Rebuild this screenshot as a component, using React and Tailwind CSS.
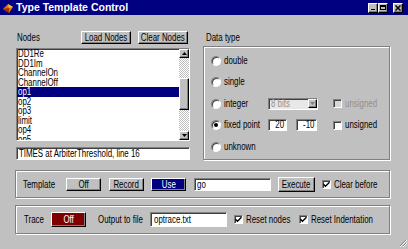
import { Fragment } from "react";

const raised =
  "border border-t-white border-l-white border-r-black border-b-black shadow-[inset_-1px_-1px_0_#808080]";
const sunken =
  "border border-t-[#808080] border-l-[#808080] border-r-white border-b-white shadow-[inset_1px_1px_0_#404040]";
const etched = "border border-[#808080] shadow-[inset_1px_1px_0_#fff,1px_1px_0_#fff]";

// narrow text: the old UI font is much narrower than Arial
function T({ children, center, right, className = "" }) {
  const origin = center ? "origin-center" : right ? "origin-right" : "origin-left";
  return <span className={`inline-block whitespace-nowrap scale-x-[0.79] ${origin} ${className}`}>{children}</span>;
}

function Btn({ children, className = "" }) {
  return (
    <div className={`flex items-center justify-center bg-[#c0c0c0] ${raised} ${className}`}>
      {children}
    </div>
  );
}

function Check({ checked, disabled }) {
  return (
    <div className={`w-[9px] h-[9px] shrink-0 ${disabled ? "bg-[#d8d8d8]" : "bg-white"} ${sunken} flex items-center justify-center`}>
      {checked && (
        <svg width="7" height="7" viewBox="0 0 7 7">
          <path d="M0.5 3.2 L2.5 5.2 L6.5 1.2" stroke="#000" strokeWidth="1.4" fill="none" />
        </svg>
      )}
    </div>
  );
}

function Radio({ on }) {
  return (
    <div className="w-[10px] h-[10px] shrink-0 rounded-full bg-white border border-t-[#808080] border-l-[#808080] border-r-white border-b-white shadow-[inset_1px_1px_0_#404040] flex items-center justify-center">
      {on && <div className="w-[4px] h-[4px] rounded-full bg-black" />}
    </div>
  );
}

function Arrow({ up, gray }) {
  return (
    <svg width="5" height="3" viewBox="0 0 5 3">
      <path d={up ? "M0 3 L2.5 0 L5 3 Z" : "M0 0 L2.5 3 L5 0 Z"} fill={gray ? "#808080" : "#000"} />
    </svg>
  );
}

const items = ["DD1Re", "DD1Im", "ChannelOn", "ChannelOff", "op1", "op2", "op3", "limit", "op4", "op5"];

export default function App() {
  return (
    <div className="w-[408px] h-[249px] bg-[#c0c0c0] overflow-hidden flex flex-col text-[10px] text-black font-['Liberation_Sans',Arial,sans-serif] leading-none whitespace-nowrap antialiased">
      {/* title bar */}
      <div className="h-[15px] bg-[#000080] flex items-center shrink-0">
        <svg width="12" height="12" viewBox="0 0 12 12" className="ml-[2px]">
          <path d="M1 7 L6 2 L11 5 L7 11 Z" fill="#e07010" />
          <path d="M6 2 L11 5 L7 6 Z" fill="#f8c040" />
          <path d="M1 7 L7 6 L7 11 Z" fill="#a03008" />
        </svg>
        <span className="ml-[2px] text-white font-bold text-[10.5px]">Type Template Control</span>
        <div className="ml-auto mr-[5px] flex items-center">
          <Btn className="w-[10px] h-[10px]">
            <div className="w-[4px] h-[1.5px] bg-black mt-[4px]" />
          </Btn>
          <Btn className="w-[10px] h-[10px]">
            <div className="w-[6px] h-[5px] border border-black border-t-2" />
          </Btn>
          <Btn className="w-[10px] h-[10px] ml-[5px]">
            <svg width="6" height="6" viewBox="0 0 6 6">
              <path d="M0.5 0.5 L5.5 5.5 M5.5 0.5 L0.5 5.5" stroke="#000" strokeWidth="1.5" />
            </svg>
          </Btn>
        </div>
      </div>

      {/* top section */}
      <div className="flex mt-[16px] ml-[16px]">
        <div className="w-[174px] flex flex-col">
          <div className="h-[13px] flex items-center">
            <span className="w-[65px] pl-[1px]"><T>Nodes</T></span>
            <Btn className="w-[50px] h-[13px]"><T center>Load Nodes</T></Btn>
            <Btn className="w-[50px] h-[13px] ml-[7px]"><T center>Clear Nodes</T></Btn>
          </div>
          <div className={`mt-[4px] h-[93px] bg-white ${sunken} flex overflow-clip`}>
            <div className="flex-1 flex flex-col">
              {items.map((it, i) => (
                <div
                  key={it}
                  className={`${i % 2 ? "h-[9px]" : "h-[10px]"} shrink-0 flex items-center pl-[1px] ${it === "op1" ? "bg-[#000080] text-white" : "text-black"}`}
                >
                  <T>{it}</T>
                </div>
              ))}
            </div>
            <div className="w-[10px] flex flex-col bg-[image:repeating-conic-gradient(#ffffff_0%_25%,#c0c0c0_0%_50%)] bg-[length:2px_2px]">
              <Btn className="h-[9px] w-[10px] shrink-0">
                <Arrow up />
              </Btn>
              <div className="h-[20px]" />
              <div className={`h-[32px] ${raised} bg-[#c0c0c0]`} />
              <div className="flex-1" />
              <Btn className="h-[9px] w-[10px] shrink-0">
                <Arrow />
              </Btn>
            </div>
          </div>
          <div className={`mt-[6px] h-[13px] bg-white ${sunken} flex items-center pl-[2px]`}>
            <T>TIMES at ArbiterThreshold, line 16</T>
          </div>
        </div>

        <div className="w-[187px] ml-[13px] flex flex-col">
          <div className="h-[13px] flex items-center pl-[3px]"><T>Data type</T></div>
          <div className={`mt-[2px] h-[114px] ${etched} pt-[3px] pl-[7px] flex flex-col`}>
            {[
              ["double"],
              ["single"],
              ["integer", "int"],
              ["fixed point", "fix"],
              ["unknown"],
            ].map(([label, kind]) => (
              <div key={label} className="h-[21.5px] flex items-center">
                <div className="w-[57px] flex items-center">
                  <Radio on={kind === "fix"} />
                  <span className="ml-[3px]"><T>{label}</T></span>
                </div>
                {kind === "int" && (
                  <Fragment>
                    <div className={`w-[50px] h-[12px] bg-[#e8e8e8] ${sunken} flex items-center`}>
                      <span className="flex-1 pl-[2px] text-[#909090]"><T>8 bits</T></span>
                      <Btn className="w-[9px] h-[9px]">
                        <Arrow gray />
                      </Btn>
                    </div>
                    <div className="ml-[15px] flex items-center">
                      <Check disabled />
                      <span className="ml-[3px] text-[#909090]"><T>unsigned</T></span>
                    </div>
                  </Fragment>
                )}
                {kind === "fix" && (
                  <Fragment>
                    <div className={`w-[19px] h-[12px] bg-white ${sunken} flex items-center justify-end pr-[2px]`}><T right>20</T></div>
                    <div className={`ml-[9px] w-[21px] h-[12px] bg-white ${sunken} flex items-center justify-end pr-[2px]`}><T right>-10</T></div>
                    <div className="ml-[16px] flex items-center">
                      <Check />
                      <span className="ml-[3px]"><T>unsigned</T></span>
                    </div>
                  </Fragment>
                )}
              </div>
            ))}
          </div>
        </div>
      </div>

      {/* template */}
      <div className={`mt-[10px] ml-[15px] w-[375px] h-[28px] ${etched} flex items-center pl-[7px] pt-[1px]`}>
        <span className="w-[44px]"><T>Template</T></span>
        <Btn className="w-[35px] h-[13px]"><T center>Off</T></Btn>
        <Btn className="w-[36px] h-[13px] ml-[8px]"><T center>Record</T></Btn>
        <div className={`w-[36px] h-[13px] ml-[7px] flex items-center justify-center bg-[#000080] text-white ${raised}`}><T center>Use</T></div>
        <div className={`ml-[8px] w-[78px] h-[13px] bg-white ${sunken} flex items-center pl-[2px]`}><T>go</T></div>
        <Btn className="w-[37px] h-[15px] ml-[7px]"><T center>Execute</T></Btn>
        <div className="ml-[7px] flex items-center">
          <Check checked />
          <span className="ml-[3px]"><T>Clear before</T></span>
        </div>
      </div>

      {/* trace */}
      <div className={`mt-[7px] ml-[15px] w-[375px] h-[29px] ${etched} flex items-center pl-[8px]`}>
        <span className="w-[29px]"><T>Trace</T></span>
        <div className={`w-[36px] h-[15px] flex items-center justify-center bg-[#800000] text-white ${raised}`}><T center>Off</T></div>
        <span className="ml-[12px] w-[52px]"><T>Output to file</T></span>
        <div className={`w-[81px] h-[15px] bg-white ${sunken} flex items-center pl-[3px]`}><T>optrace.txt</T></div>
        <div className="ml-[7px] w-[65px] flex items-center">
          <Check checked />
          <span className="ml-[3px]"><T>Reset nodes</T></span>
        </div>
        <div className="flex items-center">
          <Check checked />
          <span className="ml-[3px]"><T>Reset Indentation</T></span>
        </div>
      </div>

      {/* resize grip */}
      <div className="mt-auto self-end mr-[1px] mb-[2px]">
        <svg width="8" height="8" viewBox="0 0 8 8">
          <path d="M7 1 L1 7 M7 4 L4 7" stroke="#808080" strokeWidth="1" />
          <path d="M8 1 L1 8 M8 4 L4 8" stroke="#ffffff" strokeWidth="1" />
        </svg>
      </div>
    </div>
  );
}
